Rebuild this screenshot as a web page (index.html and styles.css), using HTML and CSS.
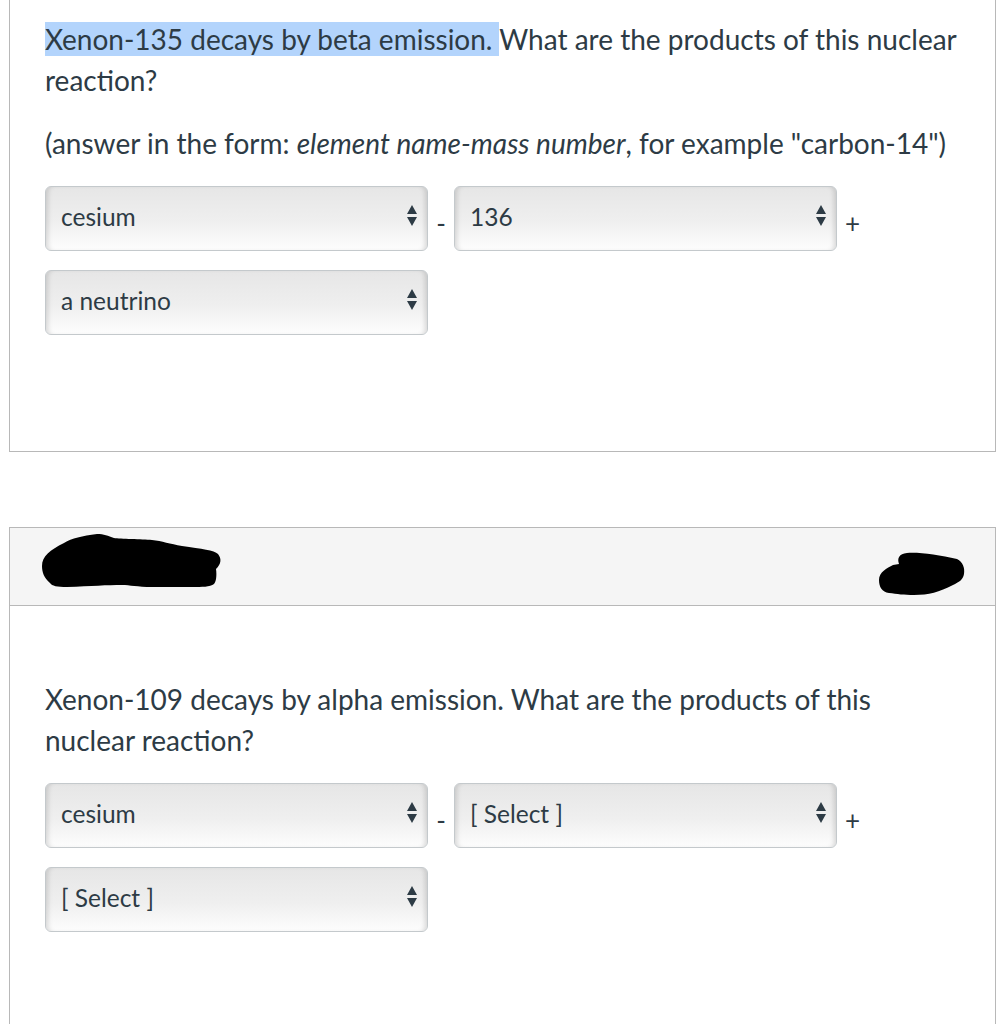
FILE: index.html
```html
<!DOCTYPE html>
<html>
<head>
<meta charset="utf-8">
<link rel="stylesheet" href="styles.css">
</head>
<body>
<div class="page">
  <section class="panel panel-cut">
    <div class="body body-first">
      <p class="q"><span class="hl">Xenon-135 decays by beta emission. </span>What are the products of this nuclear reaction?</p>
      <p class="q">(answer in the form: <em>element name-mass number</em>, for example "carbon-14")</p>
      <div class="answers">
        <div class="row">
          <div class="sel"><span class="val">cesium</span><svg class="arr" viewBox="0 0 10 22"><path d="M5 0 L10 9 L0 9 Z M0 12 L10 12 L5 21 Z"/></svg></div>
          <span class="dash">-</span>
          <div class="sel"><span class="val">136</span><svg class="arr" viewBox="0 0 10 22"><path d="M5 0 L10 9 L0 9 Z M0 12 L10 12 L5 21 Z"/></svg></div>
          <span class="plus">+</span>
        </div>
        <div class="row">
          <div class="sel"><span class="val">a neutrino</span><svg class="arr" viewBox="0 0 10 22"><path d="M5 0 L10 9 L0 9 Z M0 12 L10 12 L5 21 Z"/></svg></div>
        </div>
      </div>
    </div>
  </section>

  <section class="panel panel-second">
    <header class="head">
      <svg class="blob blob-l" viewBox="0 0 180 54"><path d="M8 49 C2 44 0 38 0 32 C0 22 8 16 22 9 C30 4 40 2 55 0 C62 0 66 2 72 4 C78 5 100 5 110 6 C120 7 128 10 140 12 C160 15 172 16 176 20 C180 25 179 30 174 35 C175 42 174 48 172 50 C168 53 160 53 150 53 L110 53 C95 53 88 51 80 51 C65 51 50 52 25 53 C15 53 10 52 8 49 Z"/></svg>
      <svg class="blob blob-r" viewBox="0 0 86 43"><path d="M20 12 C18 6 20 2 28 1 C40 0 60 3 78 7 C84 10 86 16 85 22 C84 28 80 30 74 33 C60 40 50 43 35 43 C25 43 18 42 10 41 C3 40 0 35 0 28 C0 20 8 16 14 13 Z"/></svg>
    </header>
    <div class="body body-second">
      <p class="q">Xenon-109 decays by alpha emission. What are the products of this nuclear reaction?</p>
      <div class="answers">
        <div class="row">
          <div class="sel"><span class="val">cesium</span><svg class="arr" viewBox="0 0 10 22"><path d="M5 0 L10 9 L0 9 Z M0 12 L10 12 L5 21 Z"/></svg></div>
          <span class="dash">-</span>
          <div class="sel"><span class="val">[ Select ]</span><svg class="arr" viewBox="0 0 10 22"><path d="M5 0 L10 9 L0 9 Z M0 12 L10 12 L5 21 Z"/></svg></div>
          <span class="plus">+</span>
        </div>
        <div class="row">
          <div class="sel"><span class="val">[ Select ]</span><svg class="arr" viewBox="0 0 10 22"><path d="M5 0 L10 9 L0 9 Z M0 12 L10 12 L5 21 Z"/></svg></div>
        </div>
      </div>
    </div>
  </section>
</div>
</body>
</html>
```

FILE: styles.css
```css
html, body {
  margin: 0;
  padding: 0;
  background: #ffffff;
}

body {
  font-family: Lato, "Open Sans", "Liberation Sans", sans-serif;
  color: #2d3b45;
  overflow: hidden;
}

.page {
  padding: 0 9px 0 9px;
}

.panel {
  border: 1px solid #b8b8b8;
  background: #ffffff;
}

.panel-cut {
  border-top: none;
}

.panel-second {
  margin-top: 75px;
}

.head {
  height: 77px;
  background: #f5f5f5;
  border-bottom: 1px solid #b8b8b8;
  display: flex;
  justify-content: space-between;
  padding: 0 30px 0 32px;
}

.blob {
  fill: #000000;
  display: block;
}

.blob-l {
  width: 180px;
  height: 54px;
  margin-top: 6px;
}

.blob-r {
  width: 86px;
  height: 43px;
  margin-top: 24px;
}

.body {
  padding: 0 35px;
}

.body-first {
  padding-top: 19px;
  padding-bottom: 116px;
}

.body-second {
  padding-top: 73px;
  padding-bottom: 120px;
}

.q {
  margin: 0 0 22px 0;
  font-size: 28px;
  line-height: 41px;
}

.q em {
  font-style: italic;
}

.hl {
  background: #b3d4fc;
}

.answers {
  display: flex;
  flex-direction: column;
  gap: 19px;
}

.row {
  display: flex;
  align-items: center;
}

.sel {
  width: 383px;
  height: 65px;
  box-sizing: border-box;
  border: 1px solid #c4c9cc;
  border-radius: 6px;
  background: linear-gradient(#e6e6e6 0%, #efefef 55%, #fdfdfd 100%);
  box-shadow: inset 5px 0 5px -3px rgba(0,0,0,0.14), inset -5px 0 5px -3px rgba(0,0,0,0.14);
  display: flex;
  align-items: center;
  justify-content: space-between;
  padding: 0 10px 0 15px;
  font-size: 24.5px;
}

.val {
  margin-top: -4px;
}

.arr {
  width: 10px;
  height: 22px;
  fill: #2d3b45;
  margin-top: -6px;
}

.dash {
  width: 26px;
  text-align: center;
  font-size: 26px;
  padding-top: 8px;
}

.plus {
  margin-left: 8px;
  font-size: 26px;
  padding-top: 8px;
}
```
